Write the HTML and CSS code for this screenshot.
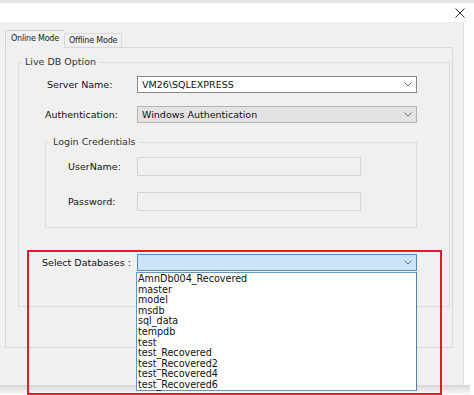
FILE: index.html
```html
<!DOCTYPE html>
<html lang="en">
<head>
    <meta charset="UTF-8">
    <title>Database Connection</title>
    <link rel="stylesheet" href="styles.css">
</head>
<body>
    <div class="screen-top"></div>
    <div class="titlebar">
        <svg class="close" width="10" height="10" viewBox="0 0 10 10"><path d="M0.5 0.5L9.5 9.5M9.5 0.5L0.5 9.5" stroke="#333" stroke-width="1"/></svg>
    </div>
    <div class="dialog">
        <div class="tabs">
            <div class="tab active">Online Mode</div>
            <div class="tab">Offline Mode</div>
        </div>
        <div class="tab-panel">
            <fieldset class="group live">
                <legend>Live DB Option</legend>
                <div class="row">
                    <label class="lbl ind-server">Server Name:</label>
                    <div class="combo white">
                        <span>VM26\SQLEXPRESS</span>
                        <svg class="chev" width="8" height="5" viewBox="0 0 8 5"><polyline points="0.5,0.5 4,4 7.5,0.5" fill="none" stroke="#6d6d6d"/></svg>
                    </div>
                </div>
                <div class="row">
                    <label class="lbl ind-auth">Authentication:</label>
                    <div class="combo gray">
                        <span>Windows Authentication</span>
                        <svg class="chev" width="8" height="5" viewBox="0 0 8 5"><polyline points="0.5,0.5 4,4 7.5,0.5" fill="none" stroke="#6d6d6d"/></svg>
                    </div>
                </div>
                <fieldset class="group login">
                    <legend>Login Credentials</legend>
                    <div class="row tall">
                        <label class="lbl-in">UserName:</label>
                        <div class="textbox"></div>
                    </div>
                    <div class="row tall">
                        <label class="lbl-in">Password:</label>
                        <div class="textbox"></div>
                    </div>
                </fieldset>
                <div class="row">
                    <label class="lbl ind-select">Select Databases :</label>
                    <div class="combo focused">
                        <span></span>
                        <svg class="chev" width="8" height="5" viewBox="0 0 8 5"><polyline points="0.5,0.5 4,4 7.5,0.5" fill="none" stroke="#6d6d6d"/></svg>
                    </div>
                </div>
            </fieldset>
        </div>
    </div>
    <div class="shadow"></div>

    <ul class="droplist">
        <li>AmnDb004_Recovered</li>
        <li>master</li>
        <li>model</li>
        <li>msdb</li>
        <li>sql_data</li>
        <li>tempdb</li>
        <li>test</li>
        <li>test_Recovered</li>
        <li>test_Recovered2</li>
        <li>test_Recovered4</li>
        <li>test_Recovered6</li>
    </ul>
    <div class="highlight"></div>
</body>
</html>
```

FILE: styles.css
```css
* { box-sizing: border-box; margin: 0; padding: 0; }
body { width: 474px; height: 395px; overflow: hidden; background: #fdfdfd; font-family: "DejaVu Sans", Verdana, sans-serif; font-size: 9.5px; color: #111; position: relative; }
.screen-top { height: 3px; background: #e4e4e4; }
.titlebar { height: 19px; background: #ffffff; display: flex; justify-content: flex-end; align-items: center; padding-right: 9px; }
.close { display: block; }
.dialog { height: 363px; width: 464px; background: #f0f0f0; border-right: 1px solid #e2e2e2; padding: 8px 0 0 5px; }
.tabs { display: flex; align-items: flex-end; height: 17px; position: relative; z-index: 1; }
.tab { height: 14px; padding: 0 4px; border: 1px solid #d9d9d9; border-bottom: none; font-size: 8px; letter-spacing: -0.2px; line-height: 13px; color: #222; background: #f0f0f0; }
.tab.active { height: 18px; margin-bottom: -1px; padding: 0 5px; line-height: 15px; border-color: #d2d2d2; border-right: none; }
.tab-panel { width: 448px; height: 301px; border: 1px solid #d9d9d9; padding: 8px 0 0 12px; }
.group { border: 1px solid #dcdcdc; }
.group legend { padding: 0 3px; margin-left: 3px; color: #333; line-height: 12px; }
.live { width: 432px; height: 251px; padding: 8px 0 0 0; }
.row { display: flex; align-items: center; height: 17px; margin-bottom: 13px; }
.lbl { width: 118px; }
.ind-server { padding-left: 28px; }
.ind-auth { padding-left: 26px; }
.ind-select { padding-left: 23px; }
.combo { width: 280px; height: 17px; display: flex; align-items: center; justify-content: space-between; padding: 0 4px 0 4px; border: 1px solid #7a7a7a; }
.combo.white { background: #ffffff; border-color: #8a8a8a; }
.combo.gray { background: #e3e3e3; border-color: #b4b4b4; }
.combo.focused { background: #cce4f7; border-color: #4f8cc4; }
.chev { display: block; }
.login { width: 372px; margin: 0 0 26px 26px; padding: 9px 0 0 0; }
.login legend { margin-left: 4px; }
.row.tall { height: 19px; margin-bottom: 16px; }
.lbl-in { width: 91px; padding-left: 22px; }
.textbox { width: 224px; height: 19px; border: 1px solid #d6d6d6; background: #f0f0f0; }
.shadow { height: 10px; width: 470px; background: linear-gradient(#d6d6d6, #fdfdfd); }
.droplist { position: absolute; left: 136px; top: 272px; width: 281px; height: 119px; list-style: none; background: #ffffff; border: 1px solid #6a96bc; border-right-color: #5a7f9f; font-size: 9.6px; color: #111; padding-top: 1px; }
.droplist li { height: 10.6px; line-height: 10.6px; padding-left: 1px; }
.highlight { position: absolute; left: 27px; top: 250px; width: 415px; height: 145px; border: 2px solid #d6222c; }
```
